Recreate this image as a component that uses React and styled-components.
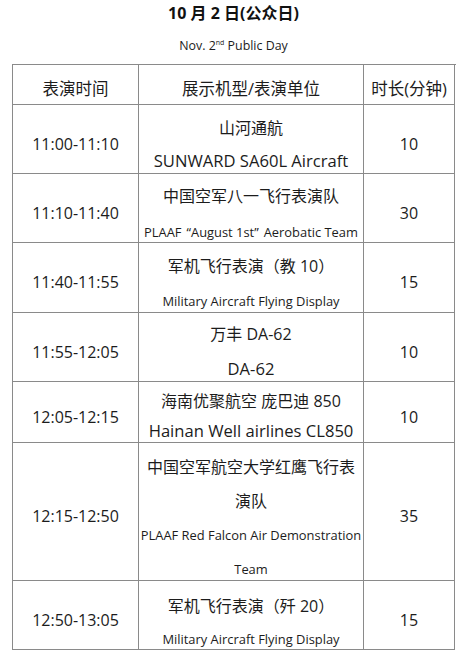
import React from "react";
import styled, { createGlobalStyle } from "styled-components";

const Global = createGlobalStyle`
  html, body { margin: 0; padding: 0; background: #fff; }
  body {
    font-family: "Open Sans", "Noto Sans CJK SC", sans-serif;
    color: #1c1c1c;
  }
`;

const Page = styled.div`
  width: 474px;
  padding-left: 12px;
  box-sizing: border-box;
`;

const Heading = styled.header`
  width: 443px;
  display: flex;
  flex-direction: column;
  align-items: center;
  margin-bottom: 9px;
`;

const Title = styled.h1`
  margin: 0;
  font-size: 16px;
  font-weight: 700;
  line-height: 26px;
  color: #111;
`;

const Subtitle = styled.div`
  margin-top: 10px;
  font-size: 12.4px;
  line-height: 19px;
  sup { font-size: 7px; line-height: 0; vertical-align: 5px; }
`;

const Table = styled.div`
  width: 443px;
  display: grid;
  grid-template-columns: 126px 225px 91px;
  border-left: 1px solid #8a8a8a;
  border-top: 1px solid #8a8a8a;
`;

const Cell = styled.div`
  box-sizing: border-box;
  height: ${(p) => p.$h}px;
  border-right: 1px solid #8a8a8a;
  border-bottom: 1px solid #8a8a8a;
  display: flex;
  flex-direction: column;
  align-items: center;
  justify-content: center;
  padding-top: ${(p) => p.$shift ?? 9}px;
  gap: ${(p) => p.$gap ?? 0}px;
  text-align: center;
  font-size: 16px;
  white-space: nowrap;
`;

const HeadCell = styled(Cell)`
  font-size: 16.5px;
  padding-top: 6px;
`;

const sizes = { cjk: 16, en: 16.6, small: 12.9 };

const Line = styled.div`
  font-size: ${(p) => sizes[p.$kind || "cjk"]}px;
  line-height: 20px;
`;

const Quote = styled.span`
  margin: ${(p) => (p.$open ? "0 0 0 5px" : "0 5px 0 0")};
`;

const rows = [
  { h: 69, time: "11:00-11:10", gap: 13, shift: 10, lines: [["山河通航"], ["SUNWARD SA60L Aircraft", "en"]], dur: "10" },
  {
    h: 69, time: "11:10-11:40", gap: 16, shift: 11,
    lines: [
      ["中国空军八一飞行表演队"],
      [<>PLAAF<Quote $open>“</Quote>August 1st<Quote>”</Quote>Aerobatic Team</>, "small"],
    ],
    dur: "30",
  },
  { h: 70, time: "11:40-11:55", gap: 15, shift: 11, lines: [["军机飞行表演（教 10）"], ["Military Aircraft Flying Display", "small"]], dur: "15" },
  { h: 69, time: "11:55-12:05", gap: 15, shift: 8, lines: [["万丰 DA-62"], ["DA-62", "en"]], dur: "10" },
  { h: 61, time: "12:05-12:15", gap: 10, shift: 7, lines: [["海南优聚航空  庞巴迪 850"], ["Hainan Well airlines CL850", "en"]], dur: "10" },
  {
    h: 138, time: "12:15-12:50", gap: 14, shift: 13,
    lines: [["中国空军航空大学红鹰飞行表"], ["演队"], ["PLAAF Red Falcon Air Demonstration", "small"], ["Team", "small"]],
    dur: "35",
  },
  { h: 69, time: "12:50-13:05", gap: 13, shift: 14, lines: [["军机飞行表演（歼 20）"], ["Military Aircraft Flying Display", "small"]], dur: "15" },
];

export default function App() {
  return (
    <Page>
      <Global />
      <Heading>
        <Title>10 月 2 日(公众日)</Title>
        <Subtitle>
          Nov. 2<sup>nd</sup> Public Day
        </Subtitle>
      </Heading>
      <Table>
        <HeadCell $h={40}>表演时间</HeadCell>
        <HeadCell $h={40}>展示机型/表演单位</HeadCell>
        <HeadCell $h={40}>时长(分钟)</HeadCell>
        {rows.map((r) => (
          <React.Fragment key={r.time}>
            <Cell $h={r.h}>{r.time}</Cell>
            <Cell $h={r.h} $gap={r.gap} $shift={r.shift}>
              {r.lines.map(([t, kind], i) => (
                <Line key={i} $kind={kind}>
                  {t}
                </Line>
              ))}
            </Cell>
            <Cell $h={r.h}>{r.dur}</Cell>
          </React.Fragment>
        ))}
      </Table>
    </Page>
  );
}
